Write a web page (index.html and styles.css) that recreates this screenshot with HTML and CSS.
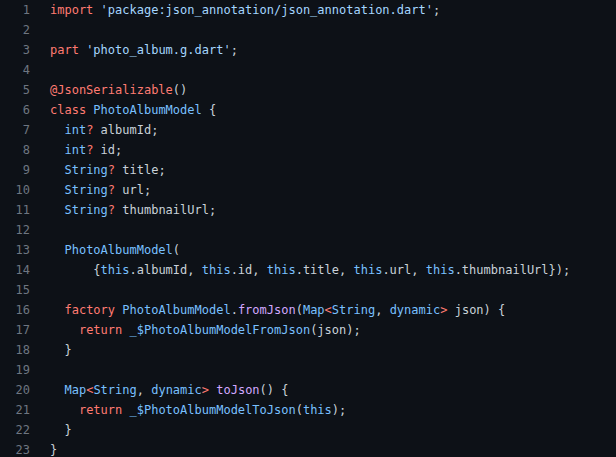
FILE: index.html
```html
<!DOCTYPE html>
<html>
<head>
<meta charset="utf-8">
<link rel="stylesheet" href="styles.css">
</head>
<body>
<div class="code">
<div class="row"><span class="ln">1</span><span class="src"><span class="k">import</span> <span class="s">'package:json_annotation/json_annotation.dart'</span>;</span></div>
<div class="row"><span class="ln">2</span><span class="src"></span></div>
<div class="row"><span class="ln">3</span><span class="src"><span class="k">part</span> <span class="s">'photo_album.g.dart'</span>;</span></div>
<div class="row"><span class="ln">4</span><span class="src"></span></div>
<div class="row"><span class="ln">5</span><span class="src"><span class="k">@JsonSerializable</span>()</span></div>
<div class="row"><span class="ln">6</span><span class="src"><span class="k">class</span> <span class="t">PhotoAlbumModel</span> {</span></div>
<div class="row"><span class="ln">7</span><span class="src">  <span class="t">int</span><span class="k">?</span> albumId;</span></div>
<div class="row"><span class="ln">8</span><span class="src">  <span class="t">int</span><span class="k">?</span> id;</span></div>
<div class="row"><span class="ln">9</span><span class="src">  <span class="t">String</span><span class="k">?</span> title;</span></div>
<div class="row"><span class="ln">10</span><span class="src">  <span class="t">String</span><span class="k">?</span> url;</span></div>
<div class="row"><span class="ln">11</span><span class="src">  <span class="t">String</span><span class="k">?</span> thumbnailUrl;</span></div>
<div class="row"><span class="ln">12</span><span class="src"></span></div>
<div class="row"><span class="ln">13</span><span class="src">  <span class="t">PhotoAlbumModel</span>(</span></div>
<div class="row"><span class="ln">14</span><span class="src">      {<span class="t">this</span>.albumId, <span class="t">this</span>.id, <span class="t">this</span>.title, <span class="t">this</span>.url, <span class="t">this</span>.thumbnailUrl});</span></div>
<div class="row"><span class="ln">15</span><span class="src"></span></div>
<div class="row"><span class="ln">16</span><span class="src">  <span class="k">factory</span> <span class="t">PhotoAlbumModel</span>.<span class="f">fromJson</span>(<span class="t">Map</span><span class="k">&lt;</span><span class="t">String</span>, <span class="t">dynamic</span><span class="k">&gt;</span> json) {</span></div>
<div class="row"><span class="ln">17</span><span class="src">    <span class="k">return</span> <span class="t">_$PhotoAlbumModelFromJson</span>(json);</span></div>
<div class="row"><span class="ln">18</span><span class="src">  }</span></div>
<div class="row"><span class="ln">19</span><span class="src"></span></div>
<div class="row"><span class="ln">20</span><span class="src">  <span class="t">Map</span><span class="k">&lt;</span><span class="t">String</span>, <span class="t">dynamic</span><span class="k">&gt;</span> <span class="f">toJson</span>() {</span></div>
<div class="row"><span class="ln">21</span><span class="src">    <span class="k">return</span> <span class="t">_$PhotoAlbumModelToJson</span>(<span class="t">this</span>);</span></div>
<div class="row"><span class="ln">22</span><span class="src">  }</span></div>
<div class="row"><span class="ln">23</span><span class="src">}</span></div>
</div>
</body>
</html>
```
FILE: styles.css
```css
html, body {
  margin: 0;
  padding: 0;
  background: #0d1117;
}
.code {
  font-family: "DejaVu Sans Mono", "Liberation Mono", monospace;
  font-size: 12px;
  line-height: 20px;
  color: #c9d1d9;
  padding-top: 0;
}
.row {
  display: flex;
  height: 20px;
  white-space: pre;
}
.ln {
  width: 30px;
  text-align: right;
  color: #6e7681;
  flex: none;
}
.src {
  padding-left: 20px;
}
.k { color: #ff7b72; }
.s { color: #a5d6ff; }
.t { color: #79c0ff; }
.f { color: #d2a8ff; }
```
